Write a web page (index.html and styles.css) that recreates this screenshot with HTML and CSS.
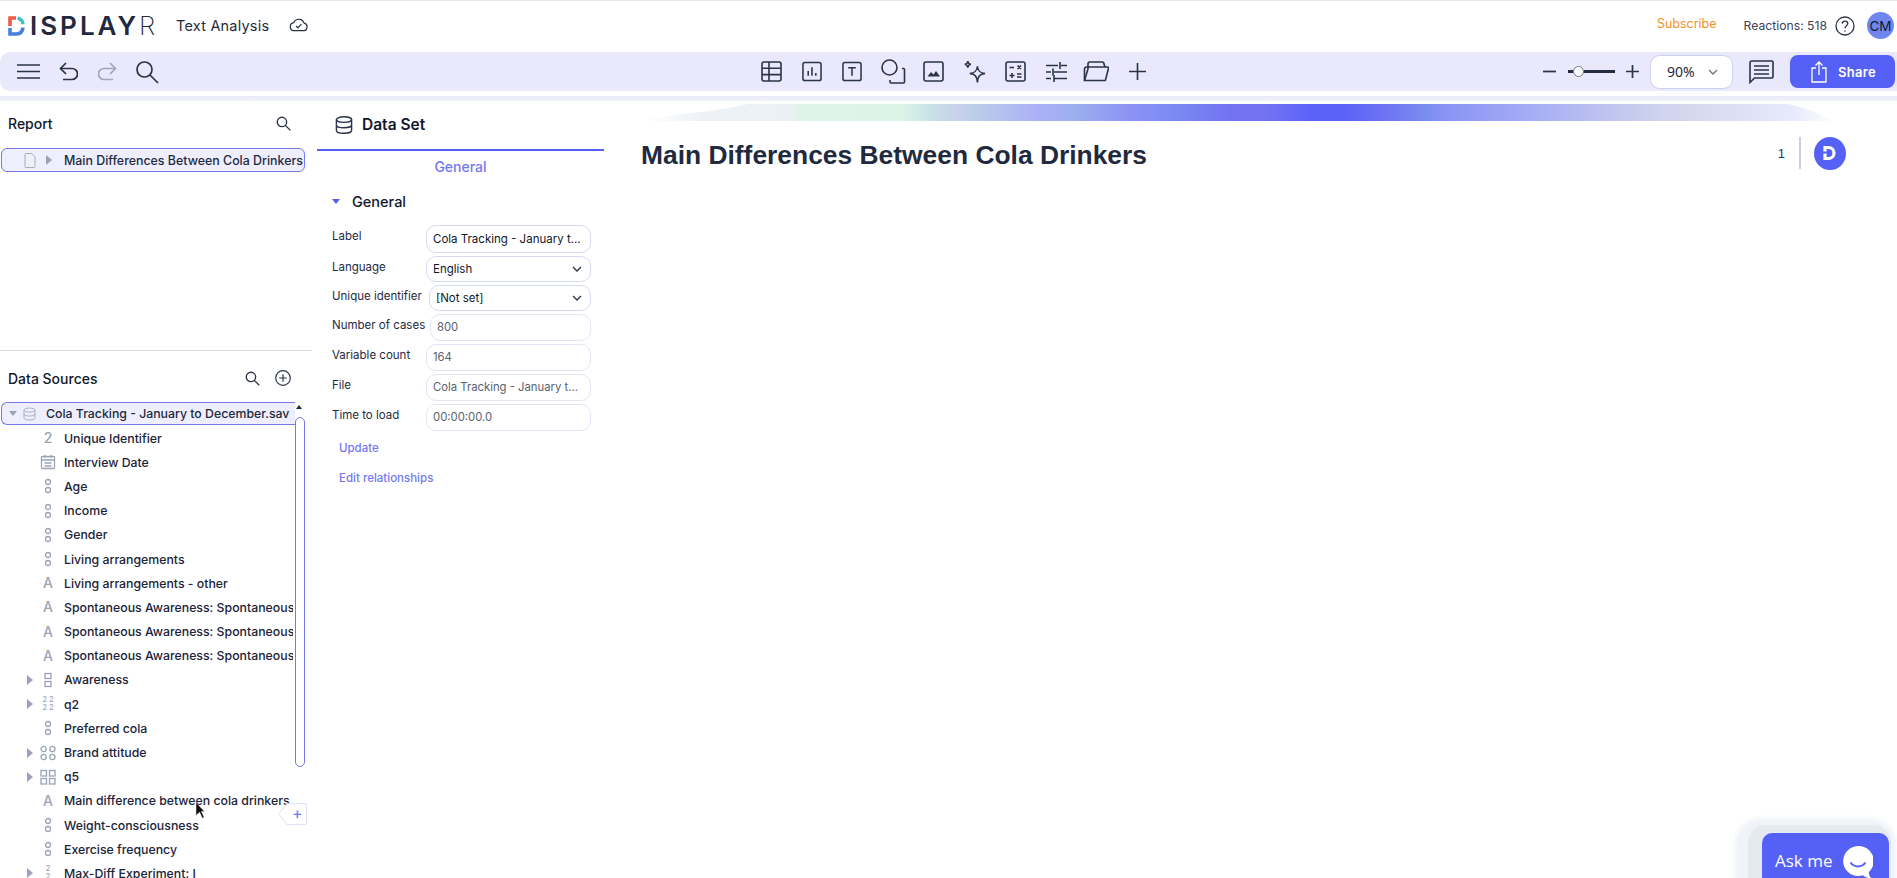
FILE: index.html
```html
<!DOCTYPE html>
<html lang="en">
<head>
<meta charset="utf-8">
<title>Text Analysis</title>
<link rel="stylesheet" href="styles.css">
</head>
<body>
<svg class="defs" width="0" height="0" aria-hidden="true">
  <symbol id="db" viewBox="0 0 18 18"><ellipse cx="9" cy="3.6" rx="7.6" ry="2.8"/><path d="M1.4 3.6v10.8c0 1.6 3.4 2.8 7.6 2.8s7.6-1.2 7.6-2.8V3.6M1.4 9c0 1.6 3.4 2.8 7.6 2.8s7.6-1.2 7.6-2.8"/></symbol>
  <symbol id="search" viewBox="0 0 24 24"><circle cx="9.5" cy="9.5" r="7.5"/><path d="M15 15l8 8"/></symbol>
  <symbol id="two-dots" viewBox="0 0 16 16"><circle cx="8" cy="4" r="2.5"/><circle cx="8" cy="12" r="2.5"/></symbol>
  <symbol id="four-dots" viewBox="0 0 16 16"><circle cx="3.6" cy="4" r="2.6"/><circle cx="12.4" cy="4" r="2.6"/><circle cx="3.6" cy="12" r="2.6"/><circle cx="12.4" cy="12" r="2.6"/></symbol>
  <symbol id="tri" viewBox="0 0 6 10"><path d="M0 0l6 5-6 5z"/></symbol>
</svg>

<header class="topbar">
  <div class="logo">
    <svg class="logo-d" viewBox="0 0 17 20"><path class="ld-red" d="M2 10V2h6"/><path class="ld-teal" d="M9.500 2.200c3 .4 5.400 2.800 5.500 6"/><path class="ld-blue" d="M2 12v6h6.500c3.500 0 6-2.200 6.500-6.500"/></svg>
    <span class="logo-main">ISPLAY</span><span class="logo-end">R</span>
  </div>
  <span class="doc-title">Text Analysis</span>
  <svg class="cloud ic" viewBox="0 0 20 14"><path d="M5 13h10a4 4 0 0 0 .9-7.900A5.800 5.800 0 0 0 5 4.500 4.300 4.300 0 0 0 5 13z"/><path d="M7.500 8l2 2 3.500-4"/></svg>
  <a class="subscribe">Subscribe</a>
  <span class="reactions">Reactions: 518</span>
  <svg class="help ic" viewBox="0 0 20 20"><circle cx="10" cy="10" r="9"/><path d="M7.200 7.600C7.400 4.400 12.800 4.400 12.800 7.600c0 2.200-2.800 2.200-2.800 4.600"/><path class="dot" d="M10 14.400v1.200"/></svg>
  <span class="avatar">CM</span>
</header>

<nav class="toolbar">
  <div class="tb-left">
    <svg class="i-menu ic" viewBox="0 0 23 15"><path d="M0 1h23M0 7.500h23M0 14h23"/></svg>
    <svg class="i-undo ic" viewBox="0 0 19 19"><path d="M7 1L1.500 6.500 7 12"/><path d="M1.500 6.500H13a5 5 0 0 1 0 11H4"/></svg>
    <svg class="i-redo ic" viewBox="0 0 19 19"><path d="M12 1l5.500 5.500L12 12"/><path d="M17.500 6.500H6a5 5 0 0 0 0 11h9"/></svg>
    <svg class="i-find ic"><use href="#search"/></svg>
  </div>
  <div class="tb-center">
    <svg class="tool ic" viewBox="0 0 21 21"><rect x="1" y="1" width="19" height="19" rx="2"/><path d="M1 7.300h19M1 13.600h19M8 1v19"/></svg>
    <svg class="tool tool-chart ic" viewBox="0 0 21 21"><rect x="1" y="1" width="19" height="19" rx="2"/><path d="M6.500 15v-5M10.500 15V6M14.500 15v-3"/></svg>
    <svg class="tool tool-t ic" viewBox="0 0 21 21"><rect x="1" y="1" width="19" height="19" rx="2"/><path d="M6.500 6.500h8M10.500 6.500V15"/></svg>
    <svg class="tool tool-shape ic" viewBox="0 0 25 25"><circle cx="8.500" cy="8.500" r="7.500"/><path d="M21 9.500h1.500a1 1 0 0 1 1 1V23a1 1 0 0 1-1 1H10a1 1 0 0 1-1-1v-2"/></svg>
    <svg class="tool ic" viewBox="0 0 21 21"><rect x="1" y="1" width="19" height="19" rx="2"/><path class="solid" d="M4.500 15.500l3.500-4.500 2.500 2.500 2.500-3.500 4 5.500z"/></svg>
    <svg class="tool tool-spark ic" viewBox="0 0 24 25"><path d="M14 6.500c.5 5 2.500 7 8 7.500-5.500.5-7.500 2.500-8 9.500-.5-7-2.500-9-8-9.500 5.500-.5 7.500-2.500 8-7.500z"/><path d="M4 1c.2 2.500 1 3.300 3.200 3.500C5 4.700 4.200 5.500 4 8c-.2-2.500-1-3.300-3.200-3.500C3 4.300 3.800 3.500 4 1z"/></svg>
    <svg class="tool ic" viewBox="0 0 21 21"><rect x="1" y="1" width="19" height="19" rx="2"/><path d="M4.500 6.500h4.500M12.500 4.500l3.500 3.500M16 4.500L12.500 8M4.500 14.500h5M7 12v5M12 13h4.500M12 16h4.500"/></svg>
    <svg class="tool tool-sliders ic" viewBox="0 0 21 21"><path d="M0 4.500h12M15 4.500h6M14 1v7M0 11h5M8 11h13M7 7.500v7M0 17.500h5M8 17.500h13M8 14v7"/></svg>
    <svg class="tool tool-folder ic" viewBox="0 0 26 21"><path d="M1.500 19.500V8a2 2 0 0 1 2-2h1.500V3a2 2 0 0 1 2-2h12a2 2 0 0 1 2 2l1 3"/><path d="M5 6h19.500a1 1 0 0 1 1 1.300L22.500 19a1 1 0 0 1-1 .5H1.500L5 8z"/></svg>
    <svg class="tool tool-plus ic" viewBox="0 0 17 17"><path d="M0 8.500h17M8.500 0v17"/></svg>
  </div>
  <div class="tb-right">
    <svg class="i-zoom ic" viewBox="0 0 13 13"><path d="M0 6.500h13"/></svg>
    <div class="slider"><span class="knob"></span></div>
    <svg class="i-zoom ic" viewBox="0 0 13 13"><path d="M0 6.500h13M6.500 0v13"/></svg>
    <div class="zoom-box"><span>90%</span><svg class="chev" viewBox="0 0 10 6"><path d="M1 1l4 4 4-4"/></svg></div>
    <svg class="i-comment ic" viewBox="0 0 25 24"><path d="M1 22.500V3a2 2 0 0 1 2-2h20a1 1 0 0 1 1 1v15a1 1 0 0 1-1 1H5.500z"/><path d="M5 6h15M5 10h15M5 14h15"/></svg>
    <button class="share"><svg class="i-share" viewBox="0 0 16 22"><path d="M5 7H1v14h14V7h-4M8 14V1M4.500 4.500L8 1l3.500 3.500"/></svg>Share</button>
  </div>
</nav>
<div class="strip"></div>

<main class="main">
  <aside class="left">
    <section class="report">
      <div class="pane-head"><h2>Report</h2><svg class="head-ic ic"><use href="#search"/></svg></div>
      <div class="report-row">
        <svg class="doc" viewBox="0 0 12 15"><path d="M1 1.500a1 1 0 0 1 1-1h5.500L11 4v9.500a1 1 0 0 1-1 1H2a1 1 0 0 1-1-1z"/></svg>
        <svg class="arrow"><use href="#tri"/></svg>
        <span>Main Differences Between Cola Drinkers</span>
      </div>
    </section>
    <section class="sources">
      <div class="pane-head pane-head-ds"><h2>Data Sources</h2><svg class="head-ic ic"><use href="#search"/></svg><svg class="head-add ic" viewBox="0 0 16 16"><circle cx="8" cy="8" r="7.300"/><path d="M8 4.300v7.400M4.300 8h7.400"/></svg></div>
      <div class="ds-row">
        <svg class="arrow-down" viewBox="0 0 10 6"><path d="M0 0h10L5 6z"/></svg>
        <svg class="ds-db"><use href="#db"/></svg>
        <span>Cola Tracking - January to December.sav</span>
      </div>
      <ul class="tree">
        <li><i class="slot"></i><b class="t-ic glyph">2</b><span>Unique Identifier</span></li>
        <li><i class="slot"></i><svg class="t-ic" viewBox="0 0 16 16"><rect x="1.500" y="2.500" width="13" height="12" rx="1"/><path d="M1.500 6h13M5 1v3M11 1v3M4.500 9h7M4.500 12h7"/></svg><span>Interview Date</span></li>
        <li><i class="slot"></i><svg class="t-ic"><use href="#two-dots"/></svg><span>Age</span></li>
        <li><i class="slot"></i><svg class="t-ic"><use href="#two-dots"/></svg><span>Income</span></li>
        <li><i class="slot"></i><svg class="t-ic"><use href="#two-dots"/></svg><span>Gender</span></li>
        <li><i class="slot"></i><svg class="t-ic"><use href="#two-dots"/></svg><span>Living arrangements</span></li>
        <li><i class="slot"></i><b class="t-ic glyph">A</b><span>Living arrangements - other</span></li>
        <li><i class="slot"></i><b class="t-ic glyph">A</b><span>Spontaneous Awareness: Spontaneous</span></li>
        <li><i class="slot"></i><b class="t-ic glyph">A</b><span>Spontaneous Awareness: Spontaneous</span></li>
        <li><i class="slot"></i><b class="t-ic glyph">A</b><span>Spontaneous Awareness: Spontaneous</span></li>
        <li><svg class="slot arrow"><use href="#tri"/></svg><svg class="t-ic" viewBox="0 0 16 16"><rect x="5" y="1.500" width="6" height="5"/><rect x="5" y="9.500" width="6" height="5"/></svg><span>Awareness</span></li>
        <li><svg class="slot arrow"><use href="#tri"/></svg><b class="t-ic glyph glyph-tiny">2 2<br>2 2</b><span>q2</span></li>
        <li><i class="slot"></i><svg class="t-ic"><use href="#two-dots"/></svg><span>Preferred cola</span></li>
        <li><svg class="slot arrow"><use href="#tri"/></svg><svg class="t-ic"><use href="#four-dots"/></svg><span>Brand attitude</span></li>
        <li><svg class="slot arrow"><use href="#tri"/></svg><svg class="t-ic" viewBox="0 0 16 16"><rect x="1" y="1.500" width="5.500" height="5.500"/><rect x="9.500" y="1.500" width="5.500" height="5.500"/><rect x="1" y="9.500" width="5.500" height="5.500"/><rect x="9.500" y="9.500" width="5.500" height="5.500"/></svg><span>q5</span></li>
        <li><i class="slot"></i><b class="t-ic glyph">A</b><span>Main difference between cola drinkers</span></li>
        <li><i class="slot"></i><svg class="t-ic"><use href="#two-dots"/></svg><span>Weight-consciousness</span></li>
        <li><i class="slot"></i><svg class="t-ic"><use href="#two-dots"/></svg><span>Exercise frequency</span></li>
        <li><svg class="slot arrow"><use href="#tri"/></svg><b class="t-ic glyph glyph-tiny">2<br>2</b><span>Max-Diff Experiment: I</span></li>
      </ul>
      <span class="scroll-arrow"></span>
      <span class="scrollbar"></span>
      <span class="add-tab"><svg viewBox="0 0 29 22"><path d="M.8 11L9 .5h18a1.500 1.500 0 0 1 1.500 1.500v18a1.500 1.500 0 0 1-1.500 1.500H9z"/></svg><b>+</b></span>
      <svg class="cursor" viewBox="0 0 10 18"><path d="M0 0l9.500 10H6l3 6.500-2 1L4 11l-4 3.500z"/></svg>
    </section>
  </aside>

  <section class="props">
    <div class="props-head"><svg class="props-db"><use href="#db"/></svg><h2>Data Set</h2></div>
    <div class="tab">General</div>
    <div class="group"><svg class="group-tri" viewBox="0 0 10 6"><path d="M0 0h10L5 6z"/></svg><h3>General</h3></div>
    <div class="form">
      <div class="field"><label>Label</label><div class="box box-tall">Cola Tracking - January t...</div></div>
      <div class="field"><label>Language</label><div class="box box-select">English<svg class="chev" viewBox="0 0 10 6"><path d="M1 1l4 4 4-4"/></svg></div></div>
      <div class="field"><label class="lab-97">Unique identifier</label><div class="box box-select">[Not set]<svg class="chev" viewBox="0 0 10 6"><path d="M1 1l4 4 4-4"/></svg></div></div>
      <div class="field"><label class="lab-98">Number of cases</label><div class="box box-ro">800</div></div>
      <div class="field"><label>Variable count</label><div class="box box-ro">164</div></div>
      <div class="field"><label>File</label><div class="box box-ro">Cola Tracking - January t...</div></div>
      <div class="field"><label>Time to load</label><div class="box box-ro box-tall">00:00:00.0</div></div>
    </div>
    <a class="action">Update</a>
    <a class="action">Edit relationships</a>
  </section>

  <section class="canvas">
    <div class="banner"></div>
    <div class="page-head">
      <h1>Main Differences Between Cola Drinkers</h1>
      <span class="page-num">1</span>
      <span class="page-sep"></span>
      <span class="page-badge"><svg viewBox="0 0 16 16"><path d="M3 6.500V2.500h3.500a5.500 5.500 0 0 1 0 11H3V8.500"/></svg></span>
    </div>
  </section>
</main>

<div class="ask">Ask me<svg viewBox="0 0 30 33"><path class="ask-b" d="M15 0a15 15 0 1 0 5 29.200c2 1.800 5 3 8.500 3.300-1.500-1.500-2.500-3.500-2.800-6.300A15 15 0 0 0 15 0z"/><path class="ask-s" d="M8 17c3 4.500 11 4.500 14 0"/></svg></div>
</body>
</html>
```
FILE: styles.css
```css
* { box-sizing: border-box; }
html, body { margin: 0; height: 878px; overflow: hidden; background: #fff; }
body { font-family: Inter, "Noto Sans", sans-serif; color: #1f2a40; position: relative; }
.defs { position: absolute; }
svg { display: block; flex: none; }
h1, h2, h3, ul { margin: 0; padding: 0; }
.ic { fill: none; stroke: #2a3347; stroke-width: 1.700; }
symbol { overflow: visible; }

.topbar { height: 52px; border-top: 1px solid #e4e6f0; padding-bottom: 2px; display: flex; align-items: center; }
.logo { display: flex; align-items: center; margin-left: 8px; width: 168px; height: 24px; color: #1f2a40; font-size: 26px; line-height: 24px; letter-spacing: 3px; }
.logo-d { width: 17px; height: 20px; margin-right: 5px; fill: none; stroke-width: 3.600; }
.ld-red { stroke: #ee5a45; }
.ld-teal { stroke: #3cc5c0; }
.ld-blue { stroke: #4a7fdc; }
.logo-main { font-weight: 600; }
.logo-end { font-weight: 200; }
.doc-title { font-size: 14.500px; width: 113px; letter-spacing: .2px; }
.cloud { width: 19px; height: 14px; stroke-width: 1.300; margin-top: -2px; }
.subscribe { margin-left: auto; font-size: 12.500px; color: #f0922b; margin-top: -4px; margin-right: 27px; }
.reactions { font-size: 12.200px; color: #3a4355; margin-right: 8px; }
.help { width: 20px; height: 20px; stroke-width: 1.300; margin-right: 12px; }
.dot { stroke-width: 1.600; }
.avatar { width: 27px; height: 27px; border-radius: 50%; background: #6f86ee; font-size: 13.500px; display: flex; align-items: center; justify-content: center; margin-right: 3px; color: #111a2e; }

.toolbar { height: 39px; background: #e9e9fb; border-radius: 10px 0 0 10px; display: flex; align-items: center; }
.tb-left { width: 761px; display: flex; align-items: center; padding-left: 17px; }
.i-menu { width: 23px; height: 15px; }
.i-undo { width: 19px; height: 19px; margin-left: 19px; }
.i-redo { width: 19px; height: 19px; margin-left: 20px; stroke: #a0a7b8; }
.i-find { width: 24px; height: 24px; margin-left: 18px; }
.tb-center { display: flex; align-items: center; }
.tool { width: 21px; height: 21px; margin-right: 20px; stroke-width: 1.600; }
.tool-chart { width: 20px; }
.tool-t { width: 20px; margin-right: 19px; }
.tool-shape { width: 25px; height: 25px; margin-right: 17px; }
.tool-spark { width: 23px; height: 24px; margin-right: 18px; }
.tool-sliders { margin-right: 16px; }
.tool-folder { width: 26px; height: 21px; margin-right: 20px; }
.tool-plus { width: 17px; height: 17px; margin-right: 0; }
.solid { fill: #2a3347; stroke: none; }
.tb-right { margin-left: auto; display: flex; align-items: center; padding-right: 2px; }
.i-zoom { width: 13px; height: 13px; }
.slider { width: 47px; height: 3px; background: #232c40; margin: 0 11px 0 12px; position: relative; }
.knob { position: absolute; left: 5px; top: -4px; width: 11px; height: 11px; border-radius: 50%; background: #fff; border: 1px solid #6d7690; }
.zoom-box { width: 83px; height: 34px; margin: 0 16px 0 11px; background: #fff; border: 1px solid #cdd2ef; border-radius: 10px; display: flex; align-items: center; padding-left: 16px; font-size: 14px; font-family: "Noto Sans", sans-serif; }
.zoom-box .chev { margin-left: 13px; stroke: #6a7180; }
.chev { width: 10px; height: 6px; fill: none; stroke: #2a3347; stroke-width: 1.300; margin-left: auto; }
.i-comment { width: 25px; height: 24px; margin-right: 16px; stroke-width: 1.600; }
.share { width: 105px; height: 33px; background: #5561f6; color: #fff; border: 0; border-radius: 8px; display: flex; align-items: center; padding: 0 0 0 21px; font: 600 13px Inter, sans-serif; letter-spacing: .3px; }
.i-share { width: 16px; height: 22px; margin-right: 11px; fill: none; stroke: #fff; stroke-width: 1.300; }
.strip { height: 10px; border-top: 5px solid #fff; background: linear-gradient(#e8e9fa, #f1f3fb); }

.main { display: flex; height: 777px; }
.left { width: 312px; flex: none; display: flex; flex-direction: column; }
.report { height: 250px; border-bottom: 1px solid #d8dbe3; }
.sources { flex: 1; position: relative; overflow: hidden; }
.pane-head { display: flex; align-items: center; height: 47px; padding: 0 21px 3px 8px; }
.pane-head-ds { height: 51px; padding: 3px 21px 0 8px; }
.pane-head h2, .props-head h2, .group h3 { font-weight: 500; font-size: 14px; color: #10182a; }
.head-ic { width: 15px; height: 15px; margin-left: auto; overflow: visible; stroke-width: 2.200; }
.pane-head-ds .head-ic { margin-right: 15px; }
.head-add { width: 16px; height: 16px; stroke-width: 1.200; }
.head-ic use { stroke-width: 2.200; }

.report-row { height: 24px; margin-left: 1px; width: 304px; border: 1px solid #7379ef; border-radius: 6px; background: #eeeefc; display: flex; align-items: center; padding-left: 22px; font-size: 12.400px; font-weight: 500; white-space: nowrap; overflow: hidden; }
.doc { width: 12px; height: 15px; fill: #f0f0f6; stroke: #a6adc0; stroke-width: 1; margin-right: 10px; }
.arrow { width: 6px; height: 10px; fill: #9aa3b8; }
.report-row .arrow { margin-right: 12px; }
.ds-row { height: 23px; width: 294px; margin-left: 1px; border: 1px solid #7379ef; border-right: 0; border-radius: 6px 0 0 6px; background: #eeeefc; display: flex; align-items: center; padding-left: 7px; font-size: 12.300px; font-weight: 500; white-space: nowrap; overflow: hidden; }
.arrow-down { width: 8px; height: 5px; fill: #9aa3b8; margin-right: 6px; }
.ds-db { width: 13px; height: 14px; fill: none; stroke: #a3abc0; stroke-width: 1.300; margin-right: 10px; }
.tree { list-style: none; width: 293px; overflow: hidden; padding-top: 1px; }
.tree li { height: 24.200px; display: flex; align-items: center; padding-left: 27px; font-size: 12.300px; font-weight: 500; white-space: nowrap; color: #1b2438; }
.slot { width: 6px; height: 10px; margin-right: 7px; display: block; flex: none; }
.t-ic { width: 16px; height: 16px; margin-right: 8px; flex: none; fill: none; stroke: #9aa3b8; stroke-width: 1.300; }
.glyph { font: 500 14px/16px Inter, sans-serif; color: #9aa3b8; text-align: center; }
.glyph-tiny { font-size: 7.500px; line-height: 8px; letter-spacing: 0; }
.scroll-arrow { position: absolute; left: 296px; top: 54px; border: 3px solid transparent; border-bottom: 4px solid #1f2a40; border-top: 0; }
.scrollbar { position: absolute; left: 295px; top: 66px; width: 10px; height: 350px; border: 1px solid #7379ef; border-radius: 6px; background: #fff; }
.add-tab { position: absolute; left: 278px; top: 452px; width: 29px; height: 22px; }
.add-tab svg { position: absolute; inset: 0; width: 29px; height: 22px; fill: #fff; stroke: #dfe2f6; stroke-width: 1; }
.add-tab b { position: absolute; left: 14px; top: 0; color: #6e73f0; font-size: 16px; font-weight: 400; line-height: 21px; }
.cursor { position: absolute; left: 196px; top: 451px; width: 9px; height: 17px; fill: #111; stroke: #fff; stroke-width: .5; }

.props { width: 287px; margin-left: 5px; flex: none; }
.props-head { height: 49.500px; border-bottom: 2px solid #5561f6; display: flex; align-items: center; padding-left: 18px; gap: 9px; margin-bottom: 0; }
.props-head h2 { font-size: 15.500px; font-weight: 600; }
.props-db { width: 18px; height: 18px; fill: none; stroke: #2a3347; stroke-width: 1.400; }
.tab { text-align: center; font-size: 14px; font-weight: 500; color: #7478f0; height: 32px; line-height: 32px; }
.group { height: 38px; display: flex; align-items: center; padding-left: 15px; }
.group-tri { width: 8px; height: 5px; fill: #5561f6; margin-right: 12px; }
.group h3 { font-size: 14.500px; }
.form { display: flex; flex-direction: column; gap: 3px; padding-top: 4px; }
.field { display: flex; align-items: flex-start; padding-left: 15px; }
.field label { flex: 0 0 94px; font-size: 11.500px; color: #1f2a40; padding-top: 4px; white-space: nowrap; }
.field .lab-97 { flex-basis: 97px; }
.field .lab-98 { flex-basis: 98px; }
.box { flex: 1; min-width: 0; margin-right: 13px; height: 26px; border: 1px solid #d5d9f3; border-radius: 10px; display: flex; align-items: center; padding: 0 7px 0 6px; font-size: 11.500px; color: #10182a; white-space: nowrap; overflow: hidden; }
.box-tall { height: 28px; }
.box-select { padding-right: 8px; }
.box-ro { color: #5a6170; border-color: #e3e5f5; font-size: 11.300px; height: 27px; }
.action { display: block; margin: 0 0 0 22px; font-size: 11.500px; font-weight: 500; color: #7478f0; height: 30px; line-height: 30px; }
.form + .action { margin-top: 2px; }

.canvas { flex: 1; padding: 3px 0 0 35px; }
.banner { height: 17px; width: 1210px; background: linear-gradient(90deg, #fff 0, #eef2f6 5%, #eaf1f4 12.800%, #dff3ea 13%, #dcf3e8 21.800%, #c9e3e6 24%, #c9cfec 26.500%, #bcd0e8 27.500%, #abb0f5 33%, #9cb0ef 36%, #8d93f5 40.500%, #7b8cf3 44%, #7272f2 49%, #7272f2 52%, #5a62f8 55.500%, #5a62f8 58%, #6d72f2 61.500%, #7a8ef0 65%, #8a95f5 67%, #a9b0f4 74.500%, #d0d4ec 84.500%, #e6e8fb 95%, #fff 99%); clip-path: polygon(0 100%, 3% 65%, 6% 40%, 8% 15%, 9% 0, 95% 0, 97% 40%, 98% 80%, 99% 100%); }
.page-head { display: flex; align-items: center; height: 52px; margin-top: 6px; }
.page-head h1 { font: 700 26.400px "Liberation Sans", Arial, sans-serif; color: #1f2a40; margin: 4px 0 0 2px; }
.page-num { margin-left: auto; font: 13px "Liberation Sans", sans-serif; color: #123a7a; }
.page-sep { width: 2px; height: 32px; background: #ccd0e0; margin: 0 13px 0 14px; }
.page-badge { width: 32px; height: 33px; border-radius: 50%; background: #5561f6; margin-right: 51px; display: flex; align-items: center; justify-content: center; }
.page-badge svg { width: 16px; height: 16px; fill: none; stroke: #fff; stroke-width: 3.200; }

.ask { position: absolute; left: 1762px; top: 833px; width: 127px; height: 70px; background: #5561f6; border-radius: 10px; color: #fff; font: 500 17px "Open Sans", sans-serif; padding: 17px 0 0 13px; line-height: 22px; box-shadow: -6px 0 0 8px rgba(224,228,236,.7), -10px 2px 4px 17px rgba(236,240,246,.8); display: flex; }
.ask svg { width: 30px; height: 33px; margin: -4px 0 0 11px; }
.ask-b { fill: #fff; }
.ask-s { fill: none; stroke: #5561f6; stroke-width: 2; stroke-linecap: round; }
```
